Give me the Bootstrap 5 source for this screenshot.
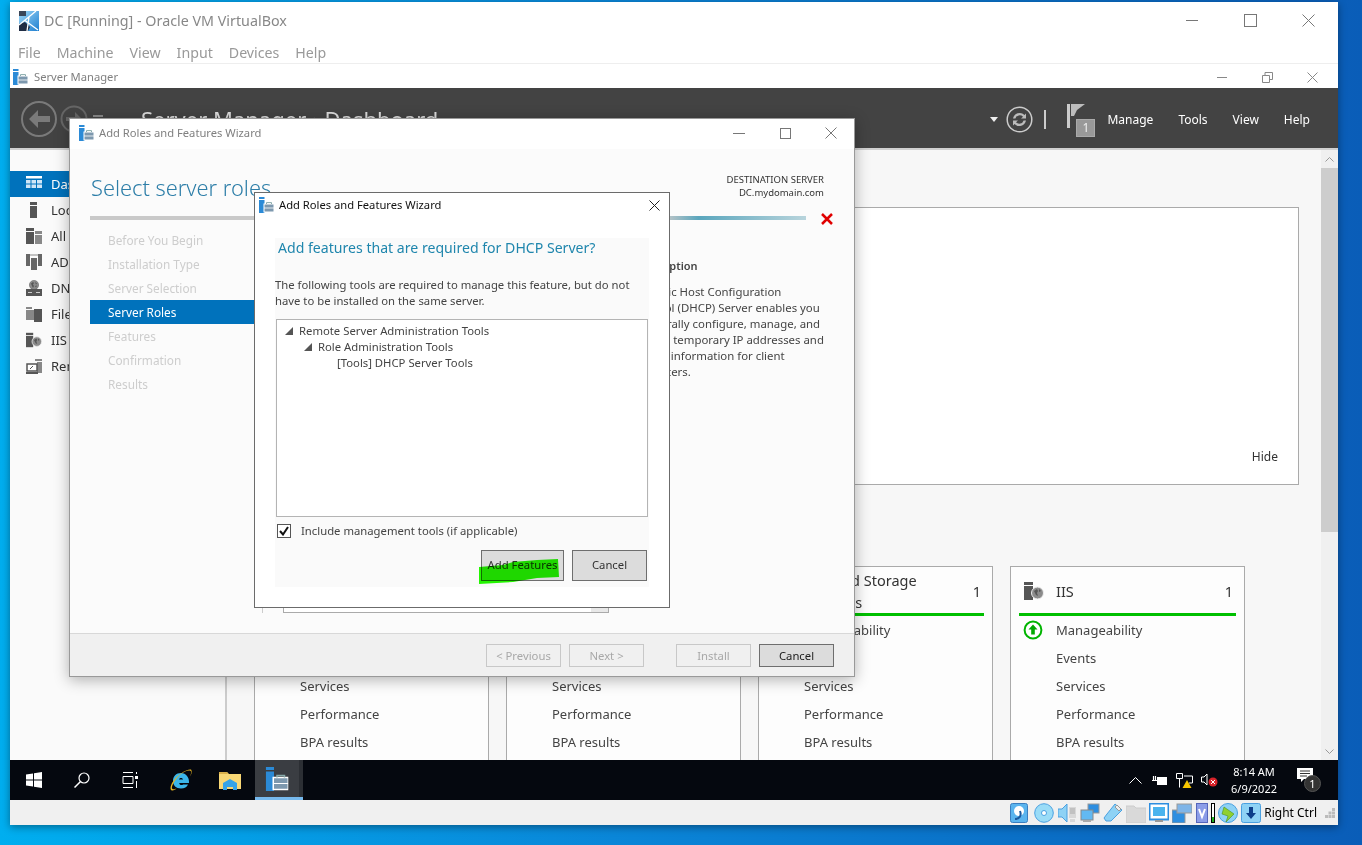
<!DOCTYPE html>
<html lang="en">
<head>
<meta charset="utf-8">
<title>DC [Running] - Oracle VM VirtualBox</title>
<link href="https://cdn.jsdelivr.net/npm/bootstrap@5.3.0/dist/css/bootstrap.min.css" rel="stylesheet">
<style>
html,body{height:845px;overflow:hidden}
body{font-family:"Noto Sans","Open Sans",sans-serif;font-size:11.2px;color:#444;background:linear-gradient(90deg,#00aeef 0%,#0a86d8 45%,#0a5db8 100%);padding:2px 24px 20px 10px;line-height:16px}
svg{display:block;flex:none}
.vmwin{position:relative;height:823px;background:#fff;box-shadow:0 2px 8px rgba(0,0,0,.4);overflow:hidden}
.vm-title{height:37px;padding-left:9px;gap:5px;color:#888;font-size:14.3px}
.vm-menu{height:25px;padding-left:8px;gap:16px;color:#999;font-size:14.2px;border-bottom:1px solid #eee;padding-top:3px}
.capbtns{margin-left:auto}
.vm-caps{gap:45px;padding-right:23px}
.sm-title{height:24px;padding:2px 0 0 3px;gap:6px;color:#808080}
.sm-caps{gap:34px;padding-right:20px}
.sm-head{height:62px;background:#434343;color:#fff;border-bottom:2px solid #d0d0d0;padding:2px 0 0 11px;font-size:12px}
.sm-back{margin-left:3px}
.sm-dash{width:10px;height:2px;background:#8a8a8a;margin:-6px 0 0 5px}
.sm-crumb{font-size:22px;color:#ddd;margin-left:38px;white-space:nowrap}
.sm-tools{margin-left:auto;padding-right:28px}
.sm-menu{gap:25px;margin-left:13px;margin-top:2px}
.sep{width:2px;height:19px;background:#ccc;margin:0 21px 0 11px}
.sm-body{height:610px}
.side{width:217px;background:#fafafa;border-right:2px solid #ccc;padding-top:21px}
.side-row{height:26px;padding-left:16px;gap:9px;color:#333;font-size:13px;white-space:nowrap}
.side-row.on{background:#0072bc;color:#fff}
.mainpane{background:#f7f7f7;padding:57px 22px 0 27px;overflow:hidden;min-width:0}
.welcome{height:278px;background:#fff;border:1px solid #aaa;padding-right:20px;padding-bottom:19px;color:#333;font-size:12px}
.tilegrid{display:grid;grid-template-columns:repeat(4,235px);gap:17px;margin-top:81px}
.tile{background:#fdfdfd;border:1px solid #aaa;height:260px;padding:0 8px;color:#444;font-size:13px}
.tile-head{height:46px;font-size:14.5px;color:#333;line-height:22px;padding:1px 3px 0 5px}
.tile-name3{margin-left:35px}
.tile-line{height:3px;background:#00c000}
.tile-row{height:28px;padding-left:37px;line-height:28px;position:relative;white-space:nowrap}
.tile-row svg{position:absolute;left:4px;top:4px}
.vscroll{width:17px;background:#f0f0f0;color:#888}
.vthumb{height:364px;background:#cdcdcd}
.vtrack{height:18px}
.taskbar{height:40px;background:#05080f;color:#fff;padding-left:0}
.tb-item{width:48px;height:40px}
.tb-ie{margin-left:3px}
.tb-ex{margin-left:1px}
.tb-active{width:44px;height:40px;background:#3a3d42;border-bottom:3px solid #76b9ed;margin-left:1px}
.tb-active2{width:4px;height:40px;background:#2c2f34;border-bottom:3px solid #76b9ed}
.tray{margin-left:auto;padding-right:17px;color:#fff}
.tray-bat{margin-left:10px}
.clock{width:62px;text-align:center;line-height:17px;margin-left:5px;margin-right:12px;font-size:11px}
.statusbar{height:25px;background:#f0f0f0;padding-right:3px;color:#000;font-size:12px}
.statusbar svg{margin-right:3px}
.statusbar .sp4{margin-right:4px}
.statusbar .sp5{margin-right:6px}
.statusbar .sp0{margin-right:0}
.rctrl{margin-right:8px}
.wiz{position:absolute;left:59px;top:116px;width:786px;height:559px;background:#fbfbfb;border:1px solid #999;box-shadow:0 3px 14px rgba(0,0,0,.3)}
.wiz-title{height:30px;background:#fff;padding:0 0 2px 9px;gap:5px;color:#808080}
.wiz-caps{gap:34px;padding-right:17px}
.wiz-head{height:67px;padding:0 30px 0 21px}
.wiz-h1{font-size:21.8px;font-weight:300;color:#2d7ea8;line-height:30px;padding-top:24px;white-space:nowrap}
.wiz-dest{font-size:9.5px;line-height:13px;padding-top:24px;text-align:right;color:#333}
.wiz-barrow{height:4px}
.wiz-bar{width:716px;height:4px;margin-left:20px;background:linear-gradient(90deg,#c9c9c9 0%,#c9c9c9 80%,#5aa6bd 85%,#b8d4dc 100%)}
.wiz-x{margin:-3px 0 0 15px}
.wiz-nav{width:173px;height:385px;border-right:1px solid #ccc;margin-left:20px;margin-top:8px;color:#cdcdcd;font-size:11.8px}
.wiz-nav>div{height:24px;line-height:24px;padding-left:18px}
.wiz-nav .on{background:#0072bc;color:#fff}
.wiz-list{width:326px;height:384px;margin:9px 21px 0 20px;background:#fff;border:1px solid #aaa;position:relative}
.wiz-track{position:absolute;right:0;top:0;bottom:0;width:17px;background:#e8e8e8}
.wiz-desc{padding-top:29px;margin-top:9px;white-space:nowrap;color:#444;font-size:11.4px}
.wiz-desc b{font-weight:600;display:block;margin:0 0 10px 6px;font-size:11px}
.wiz-foot{position:absolute;left:0;right:0;bottom:0;height:43px;background:#f0f0f0;border-top:1px solid #d8d8d8;padding:1px 20px 0 0;gap:8px}
.winbtn{width:75px;height:23px;padding:0;border-radius:0;font-size:11.3px;line-height:20px;background:#f0f0f0;border:1px solid #c8c8c8;color:#a8a8a8}
.winbtn:disabled{background:#f0f0f0;border-color:#c8c8c8;color:#a8a8a8;opacity:1}
.winbtn.live{background:#dcdcdc;border-color:#6e6e6e;color:#222}
.dlg{position:absolute;left:244px;top:190px;width:416px;height:416px;background:#fff;border:1px solid #6b6b6b}
.dlg-title{height:26px;padding:0 0 2px 4px;gap:5px;color:#111}
.dlg-close{margin:0 9px 0 auto}
.dlg-panel{margin:19px 20px 0 20px;height:349px;background:#fafafa;padding:0 1px;position:relative}
.dlg-h{font-size:14.1px;line-height:20px;padding-bottom:2px;color:#1f86ad;padding-left:2px;white-space:nowrap}
.dlg-txt{margin:17px 0 0 -1px;color:#444;font-size:11.3px;white-space:nowrap}
.tree{margin-top:10px;height:198px;background:#fff;border:1px solid #b4b4b4;padding:3px 0 0 8px;color:#444;font-size:11.3px}
.tree-row{height:16px;gap:6px;white-space:nowrap}
.tree-lvl2{padding-left:19px}
.tree-lvl3{padding-left:52px}
.chkrow{height:28px;padding-left:1px;gap:10px;font-size:11.3px}
.fakechk{width:14px;height:14px;border:1px solid #555;background:#fff}
.dlg-btn{width:83px;height:31px;padding:0;border-radius:0;font-size:11.3px;background:#dcdcdc;border:1px solid #6e6e6e;color:#333}
.dlg-btn-sm{width:75px}
.dlg-btns{gap:8px;margin-top:5px;padding-right:1px}
.scribble{position:absolute;left:0;top:0;mix-blend-mode:multiply;pointer-events:none}
.flagbox{width:27px;height:36px}
.flagpole{margin-top:3px}
.flagnum{left:9px;top:18px;width:19px;height:18px;background:#999;border:1px solid #aaa;color:#eee}
.notif{width:24px;height:24px}
.notifnum{left:7px;top:7px;width:17px;height:17px;border-radius:50%;background:#333;border:1px solid #555;font-size:11px}
.defs{position:absolute}
</style>
</head>
<body>
<svg class="defs" width="0" height="0">
<defs>
<symbol id="smi" viewBox="0 0 15 16">
<rect x="0" y="0" width="5.5" height="2" fill="#2b8ad6"/><rect x="0" y="3" width="5.5" height="13" fill="#2b8ad6"/>
<rect x="5" y="7" width="10" height="8" fill="#7d98ae" stroke="#fff" stroke-width="1"/><path d="M7.5 7V5.6h5V7" fill="none" stroke="#8aa" stroke-width="1"/><path d="M5 11h10" stroke="#fff" stroke-width=".8"/>
</symbol>
<symbol id="globe" viewBox="0 0 10 10"><circle cx="5" cy="5" r="4.6" fill="#8b8b8b" stroke="#666" stroke-width=".6"/><path d="M2 3.5l2-1.5 1 1-1 1.5 1 1.5-1 2-1-2zM6 2l2 1.5-1 1zM6 6l2-.5-1 2z" fill="#555"/></symbol>
<symbol id="up" viewBox="0 0 20 20"><circle cx="10" cy="10" r="8.4" fill="#fff" stroke="#00b400" stroke-width="2"/><path d="M10 4.5l4.5 5h-2.7v5H8.2v-5H5.5z" fill="#00a800"/></symbol>
<symbol id="iis" viewBox="0 0 20 20"><rect x="0" y="1" width="9" height="3" fill="#555"/><rect x="0" y="5" width="9" height="14" fill="#555"/><circle cx="13.5" cy="12" r="6" fill="#8b8b8b" stroke="#eee" stroke-width="1"/><path d="M10 10l3-2 1 2-1 2 1 3-2-1zM15 8l2 2-2 1z" fill="#555"/></symbol>
<linearGradient id="vbg" x1="0" y1="0" x2="1" y2="1"><stop offset="0" stop-color="#9fd8f7"/><stop offset="1" stop-color="#1f7fd0"/></linearGradient>
</defs>
</svg>

<div class="vmwin d-flex flex-column">
  <!-- VirtualBox frame -->
  <div class="vm-title d-flex align-items-center">
    <svg width="20" height="20" viewBox="0 0 20 20"><rect width="20" height="20" fill="url(#vbg)"/><path d="M0 20V13l6-2 5 5-2 4z" fill="#1f2c44"/><path d="M0 0h7v5H0z" fill="#3a4658"/><path d="M6 9.500L19 19M0 14L17 0M10 6l-2 14" stroke="#fff" stroke-width="1.300" fill="none"/></svg>
    <span>DC [Running] - Oracle VM VirtualBox</span>
    <div class="capbtns vm-caps d-flex align-items-center">
      <svg width="13" height="13" viewBox="0 0 13 13"><path d="M0 6.5h12" stroke="#777"/></svg>
      <svg width="13" height="13" viewBox="0 0 13 13"><rect x=".5" y=".5" width="12" height="12" fill="none" stroke="#777"/></svg>
      <svg width="13" height="13" viewBox="0 0 13 13"><path d="M.5.5l12 12M12.5.5l-12 12" stroke="#777"/></svg>
    </div>
  </div>
  <div class="vm-menu d-flex align-items-center"><span>File</span><span>Machine</span><span>View</span><span>Input</span><span>Devices</span><span>Help</span></div>

  <!-- Server Manager -->
  <div class="sm-title d-flex align-items-center">
    <svg width="15" height="16"><use href="#smi"/></svg><span>Server Manager</span>
    <div class="capbtns sm-caps d-flex align-items-center">
      <svg width="11" height="11" viewBox="0 0 11 11"><path d="M0 5.5h10" stroke="#888"/></svg>
      <svg width="11" height="11" viewBox="0 0 11 11"><path d="M.5 3.5h7v7h-7zM3 3.5V.5h7.500v7H7.500" fill="none" stroke="#888"/></svg>
      <svg width="11" height="11" viewBox="0 0 11 11"><path d="M.5.500l10 10M10.500.500l-10 10" stroke="#888"/></svg>
    </div>
  </div>
  <div class="sm-head d-flex align-items-center">
    <svg width="36" height="36" viewBox="0 0 36 36"><circle cx="18" cy="18" r="17" fill="none" stroke="#7a7a7a" stroke-width="2"/><path d="M8 18l9-9v6h12v6H17v6z" fill="#7a7a7a"/></svg>
    <svg class="sm-back" width="28" height="28" viewBox="0 0 28 28"><circle cx="14" cy="14" r="12.500" fill="none" stroke="#666" stroke-width="2"/><path d="M22 14l-7-7v5H6v4h9v5z" fill="#666"/></svg>
    <span class="sm-dash"></span>
    <span class="sm-crumb">Server Manager &#8250; Dashboard</span>
    <div class="sm-tools d-flex align-items-center">
      <svg class="me-2" width="8" height="5" viewBox="0 0 8 5"><path d="M0 0h8L4 5z" fill="#eee"/></svg>
      <svg width="27" height="27" viewBox="0 0 27 27"><circle cx="13.500" cy="13.500" r="12.300" fill="none" stroke="#ccc" stroke-width="1.500"/><path d="M7 12.500a6.800 6.800 0 0 1 11.500-3.500l1.500-1.500v5h-5l2-1.800a4.500 4.500 0 0 0-7.600 1.800zM20 14.500a6.800 6.800 0 0 1-11.500 3.500L7 19.500v-5h5l-2 1.800a4.500 4.500 0 0 0 7.600-1.800z" fill="#bbb"/></svg>
      <span class="sep"></span>
      <div class="flagbox position-relative">
        <svg class="flagpole" width="18" height="24" viewBox="0 0 18 24"><rect x="0" y="0" width="3" height="24" fill="#ccc"/><path d="M4 0h14l-8 6-3 6H4z" fill="#bdbdbd"/></svg>
        <span class="flagnum position-absolute d-flex align-items-center justify-content-center">1</span>
      </div>
      <div class="sm-menu d-flex"><span>Manage</span><span>Tools</span><span>View</span><span>Help</span></div>
    </div>
  </div>
  <div class="sm-body d-flex">
    <div class="side flex-shrink-0">
      <div class="side-row on d-flex align-items-center"><svg width="16" height="16" viewBox="0 0 16 16"><rect width="16" height="2.500" fill="#fff"/><path d="M0 4h4.500v3.500H0zM5.500 4H10v3.500H5.500zM11 4h5v3.500h-5zM0 8.500h4.500V12H0zM5.500 8.500H10V12H5.500zM11 8.500h5V12h-5z" fill="#cfe6f7"/></svg><span>Dashboard</span></div>
      <div class="side-row d-flex align-items-center"><svg width="16" height="16" viewBox="0 0 16 16"><rect x="4" y="0" width="7" height="3" fill="#555"/><rect x="4" y="4" width="7" height="12" fill="#555"/></svg><span>Local Server</span></div>
      <div class="side-row d-flex align-items-center"><svg width="16" height="16" viewBox="0 0 16 16"><rect y="0" width="8" height="3" fill="#555"/><rect y="4" width="8" height="12" fill="#555"/><rect x="9" y="3" width="7" height="3" fill="#888"/><rect x="9" y="7" width="7" height="9" fill="#888"/></svg><span>All Servers</span></div>
      <div class="side-row d-flex align-items-center"><svg width="16" height="16" viewBox="0 0 16 16"><path d="M0 0h4v12H0zM12 0h4v12h-4zM5 4h6v12H5z" fill="#666"/><path d="M4 1h8" stroke="#888"/></svg><span>AD DS</span></div>
      <div class="side-row d-flex align-items-center"><svg width="16" height="16" viewBox="0 0 16 16"><use href="#globe" x="3" y="0" width="10" height="10"/><rect y="9" width="16" height="7" fill="#555"/><path d="M2 12.500h4M10 12.500h4" stroke="#ccc"/></svg><span>DNS</span></div>
      <div class="side-row d-flex align-items-center"><svg width="16" height="16" viewBox="0 0 16 16"><path d="M0 1h6v2H0zM0 4h9v10H0z" fill="#888"/><path d="M8 3h8v13H8z" fill="#555"/></svg><span>File and Storage Services</span></div>
      <div class="side-row d-flex align-items-center"><svg width="16" height="16"><use href="#iis"/></svg><span>IIS</span></div>
      <div class="side-row d-flex align-items-center"><svg width="16" height="16" viewBox="0 0 16 16"><path d="M9 1h7v2H9zM11 4h5v11h-5z" fill="#888"/><path d="M1 6h10v7H1z" fill="#fff" stroke="#555" stroke-width="1.500"/><path d="M0 14h12v2H0z" fill="#555"/><path d="M4 11l3-3" stroke="#555"/></svg><span>Remote Access</span></div>
    </div>
    <div class="mainpane flex-grow-1">
      <div class="welcome d-flex align-items-end justify-content-end"><span>Hide</span></div>
      <div class="tilegrid">
        <div class="tile">
          <div class="tile-head d-flex align-items-center justify-content-between"><span>AD DS</span><span>1</span></div><div class="tile-line"></div>
          <div class="tile-row"><svg width="20" height="20"><use href="#up"/></svg>Manageability</div><div class="tile-row">Events</div><div class="tile-row">Services</div><div class="tile-row">Performance</div><div class="tile-row">BPA results</div>
        </div>
        <div class="tile">
          <div class="tile-head d-flex align-items-center justify-content-between"><span>DNS</span><span>1</span></div><div class="tile-line"></div>
          <div class="tile-row"><svg width="20" height="20"><use href="#up"/></svg>Manageability</div><div class="tile-row">Events</div><div class="tile-row">Services</div><div class="tile-row">Performance</div><div class="tile-row">BPA results</div>
        </div>
        <div class="tile">
          <div class="tile-head d-flex align-items-center justify-content-between"><span class="tile-name3">File and Storage<br>Services</span><span>1</span></div><div class="tile-line"></div>
          <div class="tile-row"><svg width="20" height="20"><use href="#up"/></svg>Manageability</div><div class="tile-row">Events</div><div class="tile-row">Services</div><div class="tile-row">Performance</div><div class="tile-row">BPA results</div>
        </div>
        <div class="tile">
          <div class="tile-head d-flex align-items-center gap-2"><svg width="20" height="20"><use href="#iis"/></svg><span class="ms-1">IIS</span><span class="ms-auto">1</span></div><div class="tile-line"></div>
          <div class="tile-row"><svg width="20" height="20"><use href="#up"/></svg>Manageability</div><div class="tile-row">Events</div><div class="tile-row">Services</div><div class="tile-row">Performance</div><div class="tile-row">BPA results</div>
        </div>
      </div>
    </div>
    <div class="vscroll d-flex flex-column flex-shrink-0">
      <div class="vtrack d-flex align-items-center justify-content-center"><svg width="9" height="5" viewBox="0 0 9 5"><path d="M.5 4.500l4-4 4 4" fill="none" stroke="#999"/></svg></div>
      <div class="vthumb"></div>
      <div class="vtrack mt-auto d-flex align-items-center justify-content-center"><svg width="9" height="5" viewBox="0 0 9 5"><path d="M.5.500l4 4 4-4" fill="none" stroke="#999"/></svg></div>
    </div>
  </div>
  <!-- Guest taskbar -->
  <div class="taskbar d-flex align-items-center">
    <div class="tb-item d-flex align-items-center justify-content-center"><svg width="16" height="16" viewBox="0 0 16 16"><path d="M0 2.500l7-1v6H0zM8 1.300l8-1.300v7.500H8zM0 8.500h7v6l-7-1zM8 8.500h8V16l-8-1.300z" fill="#fff"/></svg></div>
    <div class="tb-item d-flex align-items-center justify-content-center"><svg width="16" height="16" viewBox="0 0 16 16"><circle cx="10" cy="6" r="5" fill="none" stroke="#fff" stroke-width="1.200"/><path d="M6.500 9.500L.5 15.500" stroke="#fff" stroke-width="1.500"/></svg></div>
    <div class="tb-item d-flex align-items-center justify-content-center"><svg width="16" height="16" viewBox="0 0 16 16"><path d="M1 .5h10M1 15.500h10M1 4.500h10v7H1z" fill="none" stroke="#fff"/><rect x="13" y="4" width="3" height="3" fill="#fff"/><path d="M14.500 0v2M14.500 9v7" stroke="#fff"/></svg></div>
    <div class="tb-item tb-ie d-flex align-items-center justify-content-center"><svg width="24" height="24" viewBox="0 0 24 24"><path d="M12 5c-5 0-8 3.500-8 8s3 7.500 8 7.500c3.500 0 6-1.500 7-4h-5c-.5 1-3.500 1-3.800-1.500H20c.5-5.500-3-10-8-10zm-2 6.500c.3-2 3.700-2 4 0z" fill="#3bb6ea"/><path d="M22 1.500C19 .5 8 6 3 15c-2 4-2 7 0 7.500 1.500.3 3.500-1 4.500-2-1.500.5-4 1.500-4.500 0C2 18 8 7 16 3.500c3-1.300 5.500-1.500 6 0 .5 1-.5 4-1 5 1-1 2.500-5 1-7z" fill="#e6b422"/></svg></div>
    <div class="tb-item tb-ex d-flex align-items-center justify-content-center"><svg width="22" height="19" viewBox="0 0 22 19"><path d="M0 1h8l2 2h12v15H0z" fill="#f8d775"/><path d="M0 1h8l1 2H0z" fill="#d9b04a"/><path d="M4 12l7-4 7 4v7h-4v-3H8v3H4z" fill="#35a3e8"/></svg></div>
    <div class="tb-active d-flex align-items-center justify-content-center"><svg width="24" height="24" viewBox="0 0 15 16"><use href="#smi"/></svg></div><div class="tb-active2"></div>
    <div class="tray d-flex align-items-center">
      <svg width="13" height="7" viewBox="0 0 13 7"><path d="M.5 6.500l6-6 6 6" fill="none" stroke="#fff"/></svg>
      <svg class="tray-bat" width="16" height="11" viewBox="0 0 16 11"><rect x="5.500" y="2.500" width="9" height="7" fill="#fff" stroke="#fff"/><path d="M0 5.500h5M1.500 1v4M3.500 1v4" stroke="#fff" stroke-width="1.200"/></svg>
      <svg class="ms-2" width="17" height="15" viewBox="0 0 17 15"><path d="M.5.500h6v5h-6zM8 3h8.500v7H13M3.500 5.500v9" fill="none" stroke="#fff"/><path d="M11 7l4.500 8h-9z" fill="#f7c600"/></svg>
      <svg class="ms-2" width="17" height="14" viewBox="0 0 17 14"><path d="M.5 4h2.500l3-3v11l-3-3H.5z" fill="none" stroke="#fff"/><circle cx="12" cy="9" r="4.500" fill="#d8232a"/><path d="M10 7l4 4M14 7l-4 4" stroke="#fff"/></svg>
      <div class="clock"><div>8:14 AM</div><div>6/9/2022</div></div>
      <div class="notif position-relative"><svg width="16" height="15" viewBox="0 0 16 15"><path d="M0 0h16v11H7l-3 3v-3H0z" fill="#fff"/><path d="M3 3h10M3 5.500h10M3 8h7" stroke="#333"/></svg>
      <span class="notifnum position-absolute d-flex align-items-center justify-content-center">1</span></div>
    </div>
  </div>
  <!-- VirtualBox status bar -->
  <div class="statusbar d-flex align-items-center justify-content-end">
    <svg class="sp5" width="18" height="20" viewBox="0 0 18 20"><rect x=".5" y=".5" width="17" height="19" rx="2" fill="#5ab4ee" stroke="#3a7ec0"/><circle cx="9" cy="8" r="5" fill="#fff"/><path d="M5 16c4 0 7-3 5-8" stroke="#1c5a9e" stroke-width="2" fill="none"/></svg>
    <svg class="sp4" width="20" height="20" viewBox="0 0 20 20"><circle cx="10" cy="10" r="9.300" fill="#9adcf7" stroke="#4aa0e0"/><circle cx="10" cy="10" r="2.500" fill="#fff" stroke="#4aa0e0"/></svg>
    <svg width="19" height="20" viewBox="0 0 19 20"><path d="M0 6h4l5-5v18l-5-5H0z" fill="#8ed2f5" stroke="#4aa0e0"/><path d="M11 4h7v11h-7zM12 16h5v3h-5z" fill="#d8d8d8"/><path d="M12 6h5M12 8h5M12 10h5" stroke="#aaa"/></svg>
    <svg width="20" height="20" viewBox="0 0 20 20"><rect x="8" y="1" width="11" height="9" fill="#2d8ee0" stroke="#999"/><rect x="1" y="7" width="12" height="10" fill="#62b9f2" stroke="#888"/><rect x="3" y="17" width="8" height="2" fill="#aaa"/></svg>
    <svg width="20" height="20" viewBox="0 0 20 20"><path d="M12 1l7 6-7 7-4 4H3l-2-3 3-4z" fill="#8ed2f5" stroke="#4aa0e0"/><path d="M14 2l4 4-2 2-4-4z" fill="#eee" stroke="#999"/></svg>
    <svg width="20" height="20" viewBox="0 0 20 20"><path d="M0 3h8l2 2h10v15H0z" fill="#d9d9d9" stroke="#ccc"/></svg>
    <svg width="20" height="20" viewBox="0 0 20 20"><rect x=".5" y=".5" width="19" height="16" fill="#fff" stroke="#2d8ee0" stroke-width="2"/><rect x="4" y="4" width="12" height="9" fill="#4ab3ee"/><path d="M6 18h8" stroke="#999" stroke-width="2"/></svg>
    <svg class="sp4" width="20" height="20" viewBox="0 0 20 20"><rect x="0" y="7" width="13" height="13" fill="#2d8ee0" stroke="#999"/><rect x="5" y="1" width="15" height="9" fill="#7fb5e8" stroke="#999"/></svg>
    <svg width="12" height="20" viewBox="0 0 12 20"><rect x=".5" y=".5" width="11" height="19" fill="#8b9de8" stroke="#5566bb"/><path d="M3 6l3 8 3-8" stroke="#fff" stroke-width="2" fill="none"/></svg>
    <svg width="4" height="20" viewBox="0 0 4 20"><rect x=".5" y=".5" width="3" height="19" fill="#fff" stroke="#000"/><rect x="1" y="14" width="2" height="5" fill="#20b020"/></svg>
    <svg width="20" height="20" viewBox="0 0 20 20"><circle cx="10" cy="10" r="9.500" fill="#8ed2f5" stroke="#4aa0e0"/><path d="M6 4l10 7-8 8 2-6-6-2z" fill="#90d030" stroke="#4a9020" stroke-width=".6"/></svg>
    <svg width="20" height="20" viewBox="0 0 20 20"><rect x=".5" y=".5" width="19" height="19" rx="2" fill="#8ed2f5" stroke="#4aa0e0"/><path d="M8 4h4v6h3l-5 6-5-6h3z" fill="#0d3f8a"/></svg>
    <span class="rctrl">Right Ctrl</span>
    <svg class="sp0" width="10" height="10" viewBox="0 0 10 10"><path d="M7 0h3v3H7zM3.500 3.500h3v3h-3zM7 3.500h3v3H7zM0 7h3v3H0zM3.500 7h3v3h-3zM7 7h3v3H7z" fill="#bbb"/></svg>
  </div>

  <!-- Wizard window -->
  <div class="wiz">
    <div class="wiz-title d-flex align-items-center">
      <svg width="15" height="16"><use href="#smi"/></svg><span>Add Roles and Features Wizard</span>
      <div class="capbtns wiz-caps d-flex align-items-center">
        <svg width="13" height="13" viewBox="0 0 13 13"><path d="M0 6.500h12" stroke="#777"/></svg>
        <svg width="11" height="11" viewBox="0 0 11 11"><rect x=".5" y=".5" width="10" height="10" fill="none" stroke="#777"/></svg>
        <svg width="12" height="12" viewBox="0 0 12 12"><path d="M.5.500l11 11M11.500.500l-11 11" stroke="#777"/></svg>
      </div>
    </div>
    <div class="wiz-head d-flex justify-content-between">
      <div class="wiz-h1">Select server roles</div>
      <div class="wiz-dest">DESTINATION SERVER<br>DC.mydomain.com</div>
    </div>
    <div class="wiz-barrow d-flex align-items-start">
      <div class="wiz-bar"></div>
      <svg class="wiz-x" width="12" height="12" viewBox="0 0 12 12"><path d="M1 1l10 10M11 1L1 11" stroke="#e00000" stroke-width="2.500"/></svg>
    </div>
    <div class="d-flex">
      <div class="wiz-nav flex-shrink-0">
        <div>Before You Begin</div><div>Installation Type</div><div>Server Selection</div><div class="on">Server Roles</div><div>Features</div><div>Confirmation</div><div>Results</div>
      </div>
      <div class="wiz-list flex-shrink-0"><div class="wiz-track"></div></div>
      <div class="wiz-desc"><b>Description</b>Dynamic Host Configuration<br>Protocol (DHCP) Server enables you<br>to centrally configure, manage, and<br>provide temporary IP addresses and<br>related information for client<br>computers.</div>
    </div>
    <div class="wiz-foot d-flex align-items-center justify-content-end">
      <button class="btn winbtn" disabled>&lt; Previous</button>
      <button class="btn winbtn" disabled>Next &gt;</button>
      <button class="btn winbtn ms-4" disabled>Install</button>
      <button class="btn winbtn live">Cancel</button>
    </div>
  </div>

  <!-- Confirmation dialog -->
  <div class="dlg">
    <div class="dlg-title d-flex align-items-center">
      <svg width="15" height="16"><use href="#smi"/></svg><span>Add Roles and Features Wizard</span>
      <svg class="dlg-close" width="11" height="11" viewBox="0 0 11 11"><path d="M.5.500l10 10M10.500.500l-10 10" stroke="#222"/></svg>
    </div>
    <div class="dlg-panel">
      <div class="dlg-h">Add features that are required for DHCP Server?</div>
      <div class="dlg-txt">The following tools are required to manage this feature, but do not<br>have to be installed on the same server.</div>
      <div class="tree">
        <div class="tree-row d-flex align-items-center"><svg width="8" height="8" viewBox="0 0 8 8"><path d="M8 0v8H0z" fill="#555"/></svg><span>Remote Server Administration Tools</span></div>
        <div class="tree-row tree-lvl2 d-flex align-items-center"><svg width="8" height="8" viewBox="0 0 8 8"><path d="M8 0v8H0z" fill="#555"/></svg><span>Role Administration Tools</span></div>
        <div class="tree-row tree-lvl3 d-flex align-items-center"><span>[Tools] DHCP Server Tools</span></div>
      </div>
      <div class="chkrow d-flex align-items-center">
        <span class="fakechk d-flex align-items-center justify-content-center"><svg width="10" height="10" viewBox="0 0 10 10"><path d="M1 5l3 3.500L9 1" fill="none" stroke="#111" stroke-width="2"/></svg></span>
        <span>Include management tools (if applicable)</span>
      </div>
      <div class="dlg-btns d-flex justify-content-end">
        <button class="btn dlg-btn">Add Features</button>
        <button class="btn dlg-btn dlg-btn-sm">Cancel</button>
      </div>
      <svg class="scribble" width="373" height="349" viewBox="0 0 373 349"><path d="M204 329l24-2 10-3 24-2 21-1 1 18-22 1-24 4-34 2z" fill="#24fa00"/></svg>
    </div>
  </div>
</div>
<script src="https://cdn.jsdelivr.net/npm/bootstrap@5.3.0/dist/js/bootstrap.bundle.min.js"></script>
</body>
</html>
